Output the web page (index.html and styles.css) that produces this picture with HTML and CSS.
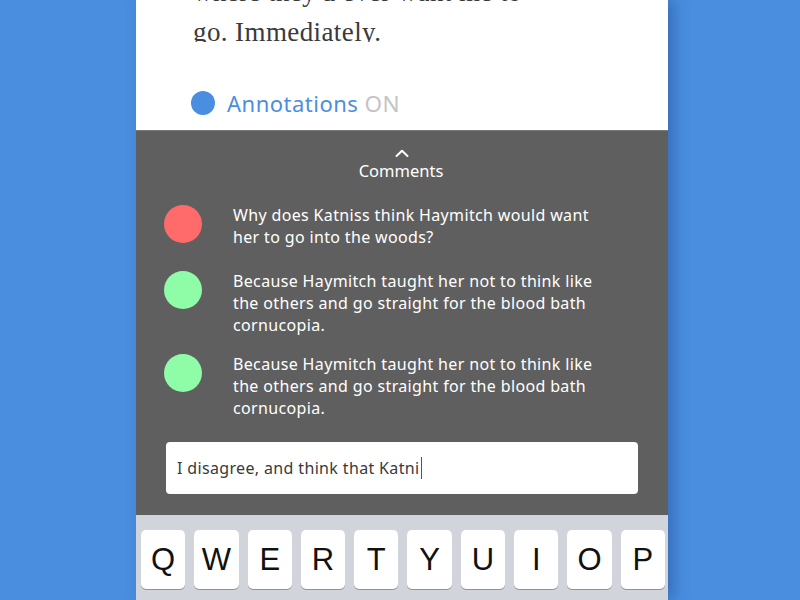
FILE: index.html
```html
<!DOCTYPE html>
<html>
<head>
<meta charset="utf-8">
<link rel="stylesheet" href="styles.css">
</head>
<body>
<div class="phone">
  <section class="reader">
    <div class="book-clip">
      <p class="book">where they'd ever want me to<br>go. Immediately.</p>
    </div>
    <div class="annot">
      <span class="annot-dot"></span>
      <span class="annot-label">Annotations</span>
      <span class="annot-state">ON</span>
    </div>
  </section>
  <section class="comments">
    <div class="comments-head">
      <svg class="chev" width="16" height="10" viewBox="0 0 16 10"><path d="M2.5 8 L8 2.8 L13.5 8" fill="none" stroke="#fff" stroke-width="2" stroke-linecap="round" stroke-linejoin="round"/></svg>
      <div class="comments-title">Comments</div>
    </div>
    <div class="comment first">
      <span class="dot red"></span>
      <p class="ctext">Why does Katniss think Haymitch would want<br>her to go into the woods?</p>
    </div>
    <div class="comment">
      <span class="dot green"></span>
      <p class="ctext">Because Haymitch taught her not to think like<br>the others and go straight for the blood bath<br>cornucopia.</p>
    </div>
    <div class="comment">
      <span class="dot green"></span>
      <p class="ctext">Because Haymitch taught her not to think like<br>the others and go straight for the blood bath<br>cornucopia.</p>
    </div>
    <div class="input">I disagree, and think that Katni<span class="caret"></span></div>
  </section>
  <section class="keyboard">
    <div class="key">Q</div><div class="key">W</div><div class="key">E</div><div class="key">R</div><div class="key">T</div><div class="key">Y</div><div class="key">U</div><div class="key">I</div><div class="key">O</div><div class="key">P</div>
  </section>
</div>
</body>
</html>
```
FILE: styles.css
```css
html, body { margin: 0; padding: 0; }
body {
  background: #4a8ee0;
  width: 800px;
  height: 600px;
  overflow: hidden;
  font-family: "Noto Sans", "Lato", sans-serif;
}
.phone {
  width: 532px;
  height: 600px;
  margin-left: 136px;
  display: flex;
  flex-direction: column;
  box-shadow: 6px 0 14px rgba(30, 70, 140, 0.45);
}
.reader {
  background: #fff;
  height: 130px;
  flex: none;
}
.book-clip {
  height: 42px;
  overflow: hidden;
  display: flex;
  align-items: flex-end;
  padding-left: 57px;
}
.book {
  margin: 0 0 -10px 0;
  font-family: "Liberation Serif", "DejaVu Serif", serif;
  font-size: 27px;
  letter-spacing: 0.4px;
  line-height: 40px;
  color: #3a3a3a;
  white-space: nowrap;
}
.annot {
  display: flex;
  align-items: center;
  margin-top: 49px;
  height: 24px;
  padding-left: 55px;
}
.annot-dot {
  width: 24px;
  height: 24px;
  border-radius: 50%;
  background: #4a8ee0;
  margin-right: 12px;
}
.annot-label {
  color: #4a8ee0;
  font-size: 22px;
  letter-spacing: 0.5px;
  margin-right: 6px;
}
.annot-state {
  color: #c4c4c4;
  font-size: 22.5px;
  letter-spacing: 0.5px;
}
.comments {
  background: #5f5f5f;
  border-top: 1px solid #7a7a7a;
  height: 385px;
  flex: none;
  box-sizing: border-box;
  padding: 17px 30px 0 28px;
  color: #fff;
}
.comments-head {
  display: flex;
  flex-direction: column;
  align-items: center;
  margin-bottom: 23px;
}
.chev { display: block; margin-left: 2px; }
.comments-title {
  font-size: 16.5px;
  line-height: 20px;
  margin-top: 3px;
}
.comment {
  display: flex;
  align-items: flex-start;
  margin-bottom: 17px;
}
.comment.first { margin-bottom: 22px; }
.dot {
  width: 38px;
  height: 38px;
  border-radius: 50%;
  flex: none;
  margin-right: 31px;
  margin-top: 1px;
}
.red { background: #ff6b6b; }
.green { background: #8ffca8; }
.ctext {
  margin: 0;
  font-size: 16px;
  letter-spacing: 0.35px;
  line-height: 22px;
}
.input {
  margin-top: 23px;
  margin-left: 2px;
  width: 472px;
  height: 52px;
  background: #fff;
  border-radius: 4px;
  color: #3a3a3a;
  font-size: 16px;
  letter-spacing: 0.35px;
  display: flex;
  align-items: center;
  padding-left: 11px;
  box-sizing: border-box;
}
.caret {
  display: inline-block;
  width: 1px;
  height: 22px;
  background: #555;
  margin-left: 1px;
}
.keyboard {
  flex: 1;
  background: #d1d5db;
  display: flex;
  gap: 9px;
  padding: 15px 3px 0 5px;
}
.key {
  flex: 1;
  height: 59px;
  background: #fff;
  border-radius: 5px;
  box-shadow: 0 1px 0 #8e9197;
  display: flex;
  align-items: center;
  justify-content: center;
  font-family: "Liberation Sans", Arial, sans-serif;
  font-size: 31px;
  color: #111;
}
```
